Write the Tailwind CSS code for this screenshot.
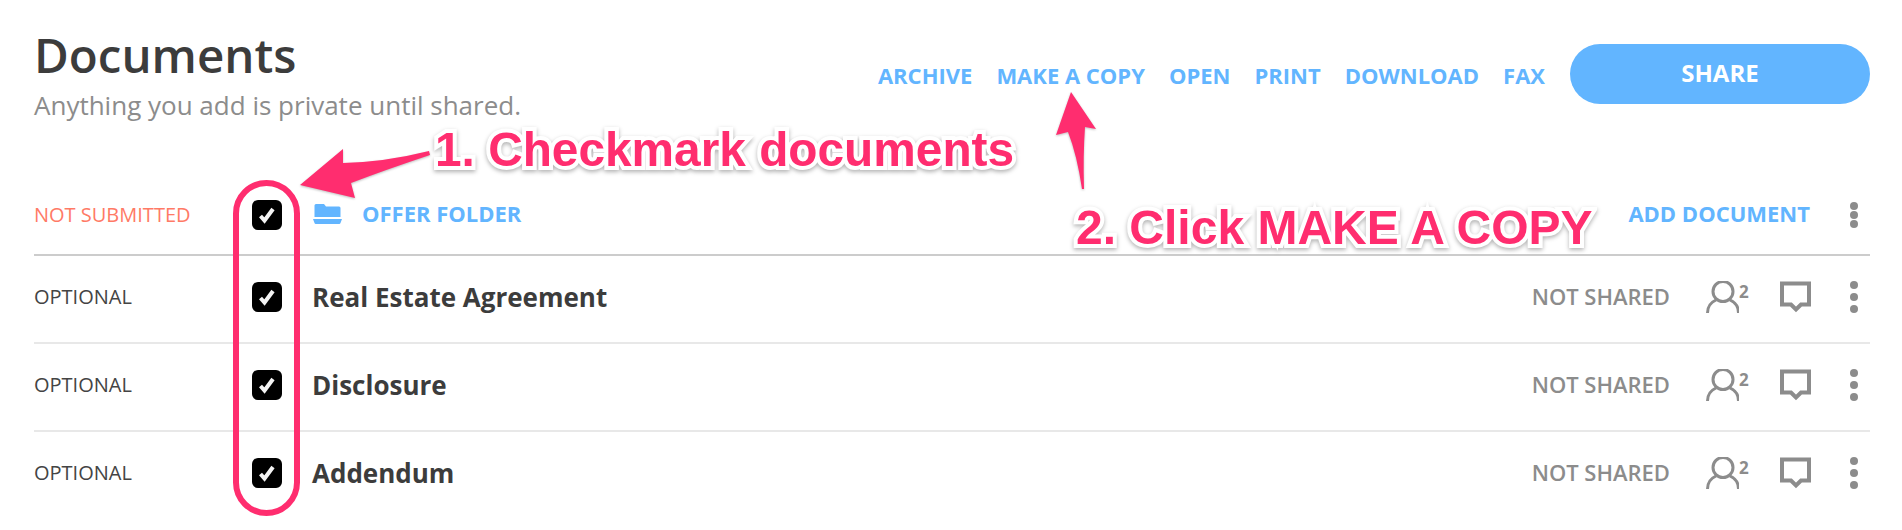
<!DOCTYPE html>
<html>
<head>
<meta charset="utf-8">
<script src="https://cdn.jsdelivr.net/npm/@tailwindcss/browser@4"></script>
</head>
<body class="bg-white overflow-hidden">
<div class="relative w-[1902px] h-[530px] pl-[34px] pr-[32px] font-['Open_Sans',sans-serif]">
  <div class="flex justify-between h-[169px]">
    <div class="pt-[23px]">
      <h1 class="text-[47.500px] leading-[64px] text-[#3c3c3c] font-semibold">Documents</h1>
      <p class="mt-[2px] text-[26px] leading-[32px] text-[#8c8c8c]">Anything you add is private until shared.</p>
    </div>
    <div class="flex items-start pt-[44px] gap-[24px] text-[22px] font-bold text-[#62b5ff]">
      <a class="leading-[60px] pt-[1px]">ARCHIVE</a><a class="leading-[60px] pt-[1px]">MAKE A COPY</a><a class="leading-[60px] pt-[1px]">OPEN</a><a class="leading-[60px] pt-[1px]">PRINT</a><a class="leading-[60px] pt-[1px]">DOWNLOAD</a><a class="leading-[60px] pt-[1px]">FAX</a>
      <button class="ml-[1px] w-[300px] h-[60px] pb-[3px] rounded-full bg-[#62b5ff] text-white text-[24px] font-bold">SHARE</button>
    </div>
  </div>

  <div class="flex items-center h-[87px] pt-[7px] border-b-2 border-[#cccccc]">
    <span class="w-[218px] text-[20px] text-[#ff7a66]">NOT SUBMITTED</span>
    <span class="w-[60px]"><span class="flex items-center justify-center w-[30px] h-[30px] rounded-[6px] bg-black"><svg width="20" height="20" viewBox="0 0 20 20" fill="none"><path d="M3.500 11 L7.500 15.500 L16 4" stroke="#f4f4f4" stroke-width="4"/></svg></span></span>
    <svg class="w-[29px] h-[20px] ml-[1px] mb-[2px] mr-[20px]" viewBox="0 0 29 20" fill="#62b5ff"><path d="M3 0h8l2 2.500h13a1.500 1.500 0 0 1 1.500 1.500v9H1.500V1.500A1.500 1.500 0 0 1 3 0z"/><path d="M0 15h29l-1.500 4a1.500 1.500 0 0 1-1.500 1H3a1.500 1.500 0 0 1-1.500-1z"/></svg>
    <span class="flex-1 pb-[3px] text-[22px] font-bold text-[#62b5ff]">OFFER FOLDER</span>
    <span class="pb-[3px] text-[22px] font-bold text-[#62b5ff]">ADD DOCUMENT</span>
    <svg class="w-[8px] h-[26px] ml-[40px] mr-[12px]" viewBox="0 0 8 26" fill="#8c8c8c"><circle cx="4" cy="4" r="4"/><circle cx="4" cy="13" r="4"/><circle cx="4" cy="22" r="4"/></svg>
  </div>

  <div class="flex items-center h-[88px] pb-[4px] border-b-2 border-[#e8e8e8]">
    <span class="w-[218px] text-[20px] text-[#444]">OPTIONAL</span>
    <span class="w-[60px]"><span class="flex items-center justify-center w-[30px] h-[30px] rounded-[6px] bg-black"><svg width="20" height="20" viewBox="0 0 20 20" fill="none"><path d="M3.500 11 L7.500 15.500 L16 4" stroke="#f4f4f4" stroke-width="4"/></svg></span></span>
    <span class="flex-1 text-[26px] font-bold text-[#3c3c3c]">Real Estate Agreement</span>
    <span class="pb-[2px] text-[22px] font-semibold text-[#8c8c8c]">NOT SHARED</span>
    <svg class="w-[33px] h-[32px] ml-[36px]" viewBox="0 0 33 32" fill="none"><circle cx="17" cy="10.500" r="10" stroke="#8c8c8c" stroke-width="3"/><path d="M1.500 32c0-7 4-11 8.500-13M32.500 32c0-7-4-11-8.500-13" stroke="#8c8c8c" stroke-width="3"/></svg>
    <span class="w-[10px] -mt-[10px] text-[17px] leading-[20px] font-bold text-[#8c8c8c]">2</span>
    <svg class="w-[32px] h-[32px] ml-[31px]" viewBox="0 0 32 32" fill="none"><path d="M2 2.500h27v21h-8l-5 5-5-5H2z" stroke="#8c8c8c" stroke-width="4"/></svg>
    <svg class="w-[8px] h-[32px] ml-[38px] mr-[12px]" viewBox="0 0 8 32" fill="#8c8c8c"><circle cx="4" cy="4" r="4"/><circle cx="4" cy="16" r="4"/><circle cx="4" cy="28" r="4"/></svg>
  </div>

  <div class="flex items-center h-[88px] pb-[4px] border-b-2 border-[#e8e8e8]">
    <span class="w-[218px] text-[20px] text-[#444]">OPTIONAL</span>
    <span class="w-[60px]"><span class="flex items-center justify-center w-[30px] h-[30px] rounded-[6px] bg-black"><svg width="20" height="20" viewBox="0 0 20 20" fill="none"><path d="M3.500 11 L7.500 15.500 L16 4" stroke="#f4f4f4" stroke-width="4"/></svg></span></span>
    <span class="flex-1 text-[26px] font-bold text-[#3c3c3c]">Disclosure</span>
    <span class="pb-[2px] text-[22px] font-semibold text-[#8c8c8c]">NOT SHARED</span>
    <svg class="w-[33px] h-[32px] ml-[36px]" viewBox="0 0 33 32" fill="none"><circle cx="17" cy="10.500" r="10" stroke="#8c8c8c" stroke-width="3"/><path d="M1.500 32c0-7 4-11 8.500-13M32.500 32c0-7-4-11-8.500-13" stroke="#8c8c8c" stroke-width="3"/></svg>
    <span class="w-[10px] -mt-[10px] text-[17px] leading-[20px] font-bold text-[#8c8c8c]">2</span>
    <svg class="w-[32px] h-[32px] ml-[31px]" viewBox="0 0 32 32" fill="none"><path d="M2 2.500h27v21h-8l-5 5-5-5H2z" stroke="#8c8c8c" stroke-width="4"/></svg>
    <svg class="w-[8px] h-[32px] ml-[38px] mr-[12px]" viewBox="0 0 8 32" fill="#8c8c8c"><circle cx="4" cy="4" r="4"/><circle cx="4" cy="16" r="4"/><circle cx="4" cy="28" r="4"/></svg>
  </div>

  <div class="flex items-center h-[82px]">
    <span class="w-[218px] text-[20px] text-[#444]">OPTIONAL</span>
    <span class="w-[60px]"><span class="flex items-center justify-center w-[30px] h-[30px] rounded-[6px] bg-black"><svg width="20" height="20" viewBox="0 0 20 20" fill="none"><path d="M3.500 11 L7.500 15.500 L16 4" stroke="#f4f4f4" stroke-width="4"/></svg></span></span>
    <span class="flex-1 text-[26px] font-bold text-[#3c3c3c]">Addendum</span>
    <span class="pb-[2px] text-[22px] font-semibold text-[#8c8c8c]">NOT SHARED</span>
    <svg class="w-[33px] h-[32px] ml-[36px]" viewBox="0 0 33 32" fill="none"><circle cx="17" cy="10.500" r="10" stroke="#8c8c8c" stroke-width="3"/><path d="M1.500 32c0-7 4-11 8.500-13M32.500 32c0-7-4-11-8.500-13" stroke="#8c8c8c" stroke-width="3"/></svg>
    <span class="w-[10px] -mt-[10px] text-[17px] leading-[20px] font-bold text-[#8c8c8c]">2</span>
    <svg class="w-[32px] h-[32px] ml-[31px]" viewBox="0 0 32 32" fill="none"><path d="M2 2.500h27v21h-8l-5 5-5-5H2z" stroke="#8c8c8c" stroke-width="4"/></svg>
    <svg class="w-[8px] h-[32px] ml-[38px] mr-[12px]" viewBox="0 0 8 32" fill="#8c8c8c"><circle cx="4" cy="4" r="4"/><circle cx="4" cy="16" r="4"/><circle cx="4" cy="28" r="4"/></svg>
  </div>

  <!-- annotations over the page -->
  <div class="absolute left-[233px] top-[180px] w-[67px] h-[336px] rounded-full border-[6px] border-[#ff2d6f]"></div>
  <svg class="absolute left-0 top-0 w-[1902px] h-[530px] pointer-events-none drop-shadow-[0_1px_1px_rgba(0,0,0,0.25)]" viewBox="0 0 1902 530" fill="#ff2d6f">
    <path d="M300 185 L343 149 L343 163 Q385 162 429 151 L430 155 Q385 170 351 183 L355 198 Z"/>
    <path d="M1071 92 L1096 129 L1085 127 Q1083 155 1084 189 L1082 189 Q1077 155 1068 132 L1056 135 Z"/>
  </svg>
  <div class="absolute left-[435px] top-[118px] text-[47.800px] leading-[64px] font-bold font-['Liberation_Sans',sans-serif] text-[#ff2d6f] whitespace-nowrap [-webkit-text-stroke:8px_white] [paint-order:stroke_fill] drop-shadow-[0_2px_2px_rgba(0,0,0,0.3)]">1. Checkmark documents</div>
  <div class="absolute left-[1076px] top-[196px] text-[48px] leading-[64px] font-bold font-['Liberation_Sans',sans-serif] text-[#ff2d6f] whitespace-nowrap [-webkit-text-stroke:8px_white] [paint-order:stroke_fill] drop-shadow-[0_2px_2px_rgba(0,0,0,0.3)]">2. Click MAKE A COPY</div>
</div>
</body>
</html>
